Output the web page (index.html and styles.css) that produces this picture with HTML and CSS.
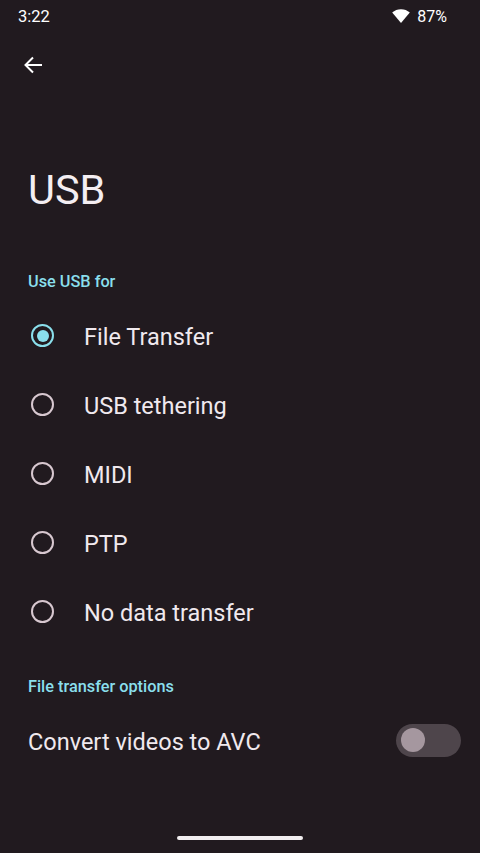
FILE: index.html
```html
<!DOCTYPE html>
<html lang="en">
<head>
<meta charset="utf-8">
<title>USB</title>
<link rel="stylesheet" href="styles.css">
</head>
<body>
<div class="screen">
  <div class="status">
    <span class="time">3:22</span>
    <span class="status-right">
      <svg class="wifi" viewBox="0 0 18 14" width="18" height="14"><path d="M9 14 0.2 3.6C2.6 1.5 5.6 0.3 9 0.3s6.400 1.200 8.800 3.300z" fill="#fff"/></svg>
      <span class="batt">87%</span>
    </span>
  </div>
  <div class="appbar">
    <svg class="back" viewBox="0 0 24 24" width="24" height="24"><path d="M21 12H4.500M12 4.500 4.500 12l7.500 7.500" fill="none" stroke="#fff" stroke-width="2"/></svg>
  </div>
  <h1 class="title">USB</h1>
  <div class="section first">Use USB for</div>
  <div class="radios">
    <div class="radio-row"><span class="radio on"></span><span class="label radio-label">File Transfer</span></div>
    <div class="radio-row"><span class="radio"></span><span class="label radio-label">USB tethering</span></div>
    <div class="radio-row"><span class="radio"></span><span class="label radio-label">MIDI</span></div>
    <div class="radio-row"><span class="radio"></span><span class="label radio-label">PTP</span></div>
    <div class="radio-row"><span class="radio"></span><span class="label radio-label">No data transfer</span></div>
  </div>
  <div class="section second">File transfer options</div>
  <div class="switch-row">
    <span class="label switch-label">Convert videos to AVC</span>
    <span class="switch"><span class="thumb"></span></span>
  </div>
  <div class="spacer"></div>
  <div class="navbar"><span class="handle"></span></div>
</div>
</body>
</html>
```

FILE: styles.css
```css
* { box-sizing: border-box; }
html, body { margin: 0; padding: 0; background: #211a1f; }
.screen {
  width: 480px;
  height: 853px;
  display: flex;
  flex-direction: column;
  background: #211a1f;
  color: #f0e9ee;
  font-family: Roboto, "Noto Sans", sans-serif;
  overflow: hidden;
}
.status {
  height: 34px;
  padding: 0 33px 2px 18px;
  display: flex;
  align-items: center;
  justify-content: space-between;
  color: #fff;
  font-size: 16px;
  flex: none;
}
.time { font-size: 16.500px; }
.status-right { display: flex; align-items: center; gap: 7px; }
.wifi { display: block; }
.appbar {
  height: 62px;
  padding: 0 0 0 21px;
  display: flex;
  align-items: center;
  flex: none;
}
.back { display: block; }
.title {
  margin: 64px 0 0;
  padding: 0 28px;
  height: 60px;
  font-size: 41.500px;
  font-weight: 400;
  line-height: 60px;
  color: #f4eef2;
  flex: none;
}
.section {
  padding: 0 28px;
  font-size: 16.300px;
  font-weight: 500;
  line-height: 20px;
  color: #8adfec;
  flex: none;
}
.section.first { margin-top: 52px; margin-bottom: 9px; }
.section.second { margin-top: 31px; }
.radios { display: flex; flex-direction: column; flex: none; }
.radio-row {
  height: 69px;
  padding-left: 31px;
  display: flex;
  align-items: center;
  gap: 30px;
}
.radio {
  width: 23px;
  height: 23px;
  border-radius: 50%;
  border: 2.500px solid #d8c8d0;
  flex: none;
  display: flex;
  align-items: center;
  justify-content: center;
}
.radio.on { border-color: #8adfec; }
.radio.on::after {
  content: "";
  width: 12px;
  height: 12px;
  border-radius: 50%;
  background: #8adfec;
}
.label { font-size: 23.500px; color: #f0e9ee; }
.radio-label { padding-top: 2px; }
.switch-label { padding-top: 4px; }
.switch-row {
  height: 70px;
  margin-top: 8px;
  padding: 0 19px 0 28px;
  display: flex;
  align-items: center;
  justify-content: space-between;
  flex: none;
}
.switch {
  width: 65px;
  height: 33px;
  border-radius: 17px;
  background: #4e454b;
  display: flex;
  align-items: center;
  padding-left: 5px;
  flex: none;
}
.thumb {
  width: 24px;
  height: 24px;
  border-radius: 50%;
  background: #a5979f;
}
.spacer { flex: 1; }
.navbar {
  height: 17px;
  display: flex;
  justify-content: center;
  flex: none;
}
.handle {
  width: 126px;
  height: 4px;
  border-radius: 2px;
  background: #f2eef0;
}
```
